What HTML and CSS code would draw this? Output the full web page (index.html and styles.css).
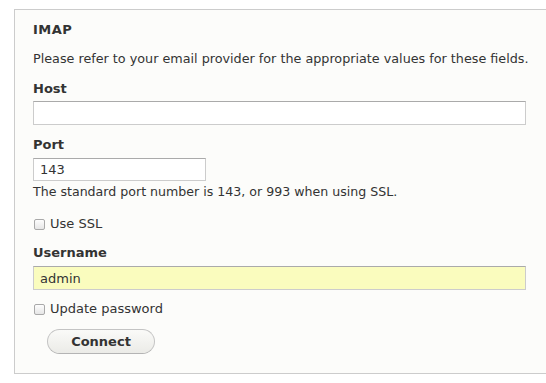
FILE: index.html
```html
<!DOCTYPE html>
<html lang="en">
<head>
  <meta charset="UTF-8">
  <meta name="viewport" content="width=device-width, initial-scale=1.0">
  <title>IMAP settings</title>
  <link rel="stylesheet" href="styles.css">
</head>
<body>
  <form class="imap">
    <div class="fieldset">
      <h2 class="legend">IMAP</h2>
      <p class="intro">Please refer to your email provider for the appropriate values for these fields.</p>

      <div class="form-item host">
        <label for="host">Host</label>
        <input type="text" id="host" class="text wide">
      </div>

      <div class="form-item port">
        <label for="port">Port</label>
        <input type="text" id="port" class="text short" value="143">
        <div class="description">The standard port number is 143, or 993 when using SSL.</div>
      </div>

      <div class="form-check ssl">
        <input type="checkbox" id="ssl">
        <label for="ssl">Use SSL</label>
      </div>

      <div class="form-item user">
        <label for="user">Username</label>
        <input type="text" id="user" class="text wide filled" value="admin">
      </div>

      <div class="form-check pass">
        <input type="checkbox" id="pass">
        <label for="pass">Update password</label>
      </div>

      <div class="actions">
        <button type="button" class="button">Connect</button>
      </div>
    </div>
  </form>
</body>
</html>
```

FILE: styles.css
```css
* {margin:0; padding:0; box-sizing: border-box;}

body{
  background: #fff;
  font-family: "DejaVu Sans", Verdana, sans-serif;
  font-size: 13px;
  line-height: 18px;
  color: #333;
}

.imap{
  padding: 9px 0 0 14px;
}

/* no right border: the box runs off the window edge */
.fieldset{
  height: 365px;
  background: #fcfcfa;
  border: 1px solid #ccc;
  border-right: none;
  padding: 11px 0 0 18px;
}

.legend{
  font-size: 13px;
  font-weight: bold;
  letter-spacing: 0.5px;
  text-transform: uppercase;
  line-height: 18px;
}

.intro{
  font-size: 12.75px;
  margin-top: 11px;
}

.form-item label{
  display: block;
  font-weight: bold;
}

.host{
  margin-top: 12px;
}

.host label{
  margin-bottom: 3px;
}

.port{
  margin-top: 11px;
}

.port label{
  margin-bottom: 4px;
}

.text{
  display: block;
  font-family: inherit;
  font-size: 13px;
  color: #333;
  background: #fff;
  border: 1px solid #ccc;
  border-top-color: #aaa;
  padding: 0 6px;
  outline: none;
}

.wide{
  width: 493px;
  height: 24px;
}

.short{
  width: 173px;
  height: 23px;
}

.filled{
  background: #fafcbe;
}

.description{
  font-size: 12.6px;
  line-height: 16px;
  margin-top: 3px;
}

.form-check{
  display: flex;
  align-items: center;
  gap: 5px;
}

.form-check input{
  appearance: none;
  width: 11px;
  height: 11px;
  margin-left: 1px;
  border: 1px solid #a9a9a9;
  border-radius: 2px;
  background: linear-gradient(#fdfdfd, #e6e6e6);
}

.ssl{
  margin-top: 15px;
}

.user{
  margin-top: 11px;
}

.user label{
  margin-bottom: 4px;
}

.pass{
  margin-top: 10px;
}

.actions{
  margin-top: 11px;
  padding-left: 14px;
}

.button{
  width: 108px;
  height: 25px;
  font-family: inherit;
  font-size: 13px;
  font-weight: bold;
  color: #333;
  border: 1px solid #c4c4c4;
  border-bottom-color: #b4b4b4;
  border-radius: 20px;
  background: linear-gradient(#fafaf8, #ebebe7);
}
```
